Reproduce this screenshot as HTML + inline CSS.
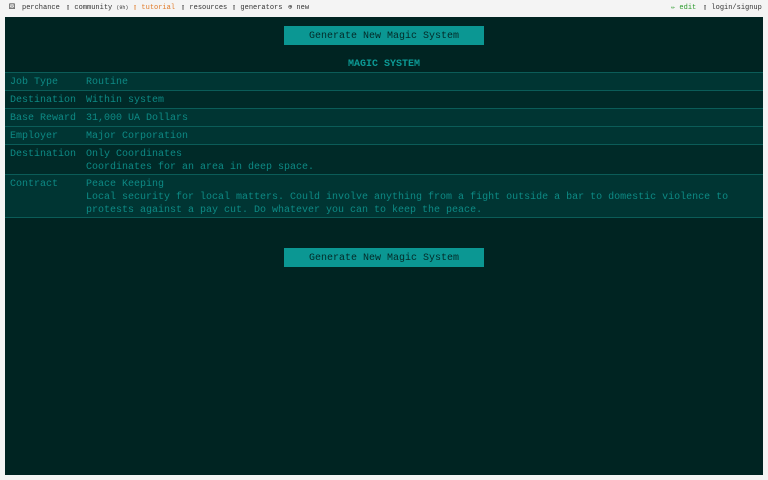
<!DOCTYPE html>
<html><head><style>
body{margin:0;width:768px;height:480px;background:#f4f4f4;font-family:"Liberation Mono",monospace;overflow:hidden;position:relative}
.top{position:absolute;top:0;left:0;right:0;height:16px;font-family:"Liberation Mono",monospace;font-size:7px;color:#333;line-height:17px}
.top span{position:absolute;top:0}
.panel{position:absolute;left:5px;top:17px;width:758px;height:458px;background:#002422}
.btn{position:absolute;left:279px;width:200px;height:19px;background:#0b9793;color:#032a28;font-size:10px;text-align:center;line-height:22px}
.title{position:absolute;top:42px;left:0;right:0;text-align:center;color:#0c9a95;font-size:10px;font-weight:bold}
table{position:absolute;top:55px;left:0;width:758px;border-collapse:collapse;color:#0d8a85;font-size:10px;line-height:13px}
td{border-top:1px solid #0b5c58;border-bottom:1px solid #0b5c58;padding:3px 0 1px 5px;vertical-align:top;white-space:pre}
tr.m td{padding-bottom:0}
td.l{width:71px}
tr.a{background:#003533}
tr.b{background:#002a28}
</style></head><body>
<div class="top">
<span style="left:9px;font-size:10px;line-height:15px">⚄</span>
<span style="left:22px">perchance</span>
<span style="left:66px">▯ community <small style="font-size:5px">(9h)</small></span>
<span style="left:133px;color:#e07b2a">▯ tutorial</span>
<span style="left:181px">▯ resources</span>
<span style="left:232px">▯ generators</span>
<span style="left:288px">⊕ new</span>
<span style="left:671px;color:#2a9a2a">✏ edit</span>
<span style="left:703px">▯ login/signup</span>
</div>
<div class="panel">
<div class="btn" style="top:9px">Generate New Magic System</div>
<div class="title">MAGIC SYSTEM</div>
<table>
<tr class="a"><td class="l">Job Type</td><td>Routine</td></tr>
<tr class="b"><td class="l">Destination</td><td>Within system</td></tr>
<tr class="a"><td class="l">Base Reward</td><td>31,000 UA Dollars</td></tr>
<tr class="a"><td class="l">Employer</td><td>Major Corporation</td></tr>
<tr class="b m"><td class="l">Destination</td><td>Only Coordinates
Coordinates for an area in deep space.</td></tr>
<tr class="a m"><td class="l">Contract</td><td>Peace Keeping
Local security for local matters. Could involve anything from a fight outside a bar to domestic violence to
protests against a pay cut. Do whatever you can to keep the peace.</td></tr>
</table>
<div class="btn" style="top:231px">Generate New Magic System</div>
</div>
</body></html>
